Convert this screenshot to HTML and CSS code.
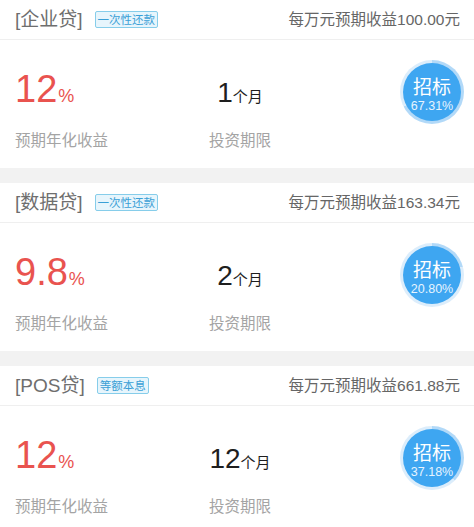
FILE: index.html
```html
<!DOCTYPE html>
<html lang="zh-CN">
<head>
<meta charset="utf-8">
<title>产品列表</title>
<link rel="stylesheet" href="styles.css">
</head>
<body>
<div class="list">
  <section class="card">
    <header class="card-head">
      <span class="title">[企业贷]</span>
      <span class="tag">一次性还款</span>
      <span class="income">每万元预期收益100.00元</span>
    </header>
    <div class="card-body">
      <div class="rate">12<span class="pct">%</span></div>
      <div class="term">1<span class="unit">个月</span></div>
      <div class="progress" style="--p: 67.31%">
        <div class="progress-inner">
          <span class="status">招标</span>
          <span class="ratio">67.31%</span>
        </div>
      </div>
      <div class="label">预期年化收益</div>
      <div class="label label-mid">投资期限</div>
    </div>
  </section>

  <section class="card">
    <header class="card-head">
      <span class="title">[数据贷]</span>
      <span class="tag">一次性还款</span>
      <span class="income">每万元预期收益163.34元</span>
    </header>
    <div class="card-body">
      <div class="rate">9.8<span class="pct">%</span></div>
      <div class="term">2<span class="unit">个月</span></div>
      <div class="progress" style="--p: 20.80%">
        <div class="progress-inner">
          <span class="status">招标</span>
          <span class="ratio">20.80%</span>
        </div>
      </div>
      <div class="label">预期年化收益</div>
      <div class="label label-mid">投资期限</div>
    </div>
  </section>

  <section class="card">
    <header class="card-head">
      <span class="title">[POS贷]</span>
      <span class="tag">等额本息</span>
      <span class="income">每万元预期收益661.88元</span>
    </header>
    <div class="card-body">
      <div class="rate">12<span class="pct">%</span></div>
      <div class="term">12<span class="unit">个月</span></div>
      <div class="progress" style="--p: 37.18%">
        <div class="progress-inner">
          <span class="status">招标</span>
          <span class="ratio">37.18%</span>
        </div>
      </div>
      <div class="label">预期年化收益</div>
      <div class="label label-mid">投资期限</div>
    </div>
  </section>
</div>
</body>
</html>
```

FILE: styles.css
```css
html, body {
  margin: 0;
  padding: 0;
  background: #f2f2f2;
}

body {
  font-family: "Liberation Sans", "Noto Sans CJK SC", sans-serif;
  color: #333;
}

.list {
  display: flex;
  flex-direction: column;
  gap: 15px;
}

.card {
  background: #ffffff;
}

.card-head {
  height: 39px;
  display: flex;
  align-items: center;
  padding: 0 14px 0 15px;
  border-bottom: 1px solid #efefef;
}

.title {
  font-size: 19px;
  color: #6e6e6e;
  line-height: 20px;
}

.tag {
  margin-left: 12px;
  font-family: "Noto Sans CJK SC", sans-serif;
  font-size: 11.5px;
  line-height: 15px;
  padding: 0 2px;
  color: #3a9fd6;
  background: #e7f5fc;
  border: 1px solid #86cdea;
  border-radius: 2px;
}

.income {
  margin-left: auto;
  font-size: 15.5px;
  color: #666;
  line-height: 18px;
}

.card-body {
  height: 128px;
  box-sizing: border-box;
  padding: 30px 10px 0 15px;
  display: grid;
  grid-template-columns: 177px 96px 1fr;
  grid-template-rows: 38px auto;
}

.rate {
  grid-column: 1;
  grid-row: 1;
  align-self: end;
  font-size: 38px;
  line-height: 38px;
  color: #e9534f;
}

.pct {
  font-size: 18px;
  line-height: 18px;
  margin-left: 1px;
}

.term {
  grid-column: 2;
  grid-row: 1;
  align-self: end;
  text-align: center;
  font-size: 28px;
  line-height: 31px;
  color: #1e1e1e;
}

.unit {
  font-family: "Noto Sans CJK SC", sans-serif;
  font-size: 15px;
  line-height: 15px;
}

.label {
  grid-row: 2;
  grid-column: 1;
  margin-top: 23px;
  font-family: "Noto Sans CJK SC", sans-serif;
  font-size: 15.5px;
  line-height: 16px;
  color: #a4a4a4;
}

.label-mid {
  grid-column: 2;
  text-align: center;
}

.progress {
  grid-column: 3;
  grid-row: 1 / span 2;
  justify-self: end;
  align-self: start;
  margin-top: -10px;
  width: 64px;
  height: 64px;
  box-sizing: border-box;
  padding: 3px;
  border-radius: 50%;
  background: conic-gradient(#b2d9f8 0 var(--p), #dcedfb var(--p) 100%);
}

.progress-inner {
  width: 58px;
  height: 58px;
  box-sizing: border-box;
  border-radius: 50%;
  background: #3ea6f1;
  color: #ffffff;
  display: flex;
  flex-direction: column;
  align-items: center;
  padding-top: 13px;
}

.status {
  font-family: "Noto Sans CJK SC", sans-serif;
  font-size: 19px;
  line-height: 20px;
}

.ratio {
  margin-top: 3px;
  font-size: 12.5px;
  line-height: 14px;
  color: #e6f4ff;
}
```
